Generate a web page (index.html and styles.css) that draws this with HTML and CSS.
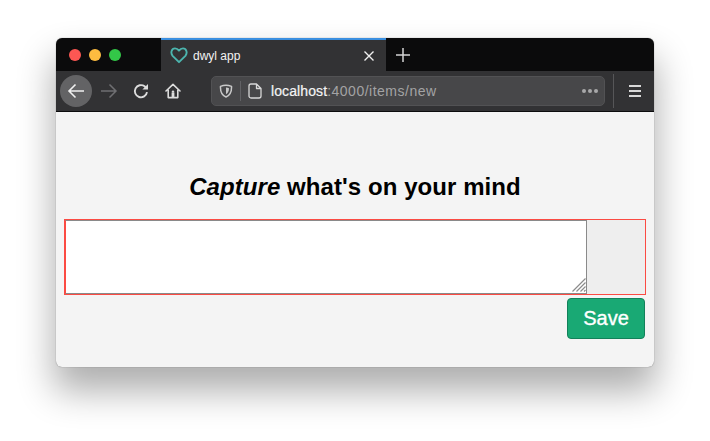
FILE: index.html
```html
<!DOCTYPE html>
<html lang="en">
<head>
<meta charset="utf-8">
<title>dwyl app</title>
<link rel="stylesheet" href="styles.css">
</head>
<body>
<div class="window">
  <div class="titlebar">
    <div class="lights">
      <span class="light red"></span>
      <span class="light yellow"></span>
      <span class="light green"></span>
    </div>
    <div class="tab">
      <svg class="heart" width="18" height="18" viewBox="0 1 18 18"><path d="M9 16.2 L2.6 9.8 C0.2 6.8 1.6 2.4 5 2.4 C6.6 2.4 8 3.2 9 4.6 C10 3.2 11.4 2.4 13 2.4 C16.4 2.4 17.8 6.8 15.4 9.8 Z" fill="none" stroke="#4cb5ae" stroke-width="1.9" stroke-linejoin="round"/></svg>
      <span class="tab-title">dwyl app</span>
      <svg class="tab-close" width="10" height="10" viewBox="0 0 10 10"><path d="M0.5 0.5 L9.5 9.5 M9.5 0.5 L0.5 9.5" stroke="#f0f0f0" stroke-width="1.4"/></svg>
    </div>
    <svg class="newtab" width="14" height="14" viewBox="0 0 14 14"><path d="M7 0 V14 M0 7 H14" stroke="#d4d4d4" stroke-width="1.5"/></svg>
  </div>
  <div class="toolbar">
    <div class="back">
      <svg width="18" height="16" viewBox="0 0 18 16"><path d="M17 8 H2 M8.5 1.5 L2 8 L8.5 14.5" fill="none" stroke="#f0f0f0" stroke-width="1.6"/></svg>
    </div>
    <svg class="forward" width="18" height="16" viewBox="0 0 18 16"><path d="M1 8 H16 M9.5 1.5 L16 8 L9.5 14.5" fill="none" stroke="#6f6f72" stroke-width="1.5"/></svg>
    <svg class="reload" width="16" height="16" viewBox="0 0 16 16"><path d="M14 9.2 A6.1 6.1 0 1 1 11.6 3.3 L13.6 5.2" fill="none" stroke="#dcdcdc" stroke-width="1.9"/><path d="M15 1 V6.6 H9.4 Z" fill="#dcdcdc"/></svg>
    <svg class="home" width="16" height="16" viewBox="0 0 16 16"><path d="M1 8 L8 1.4 L15 8 M3.2 6.8 V14.6 H12.8 V6.8" fill="none" stroke="#dcdcdc" stroke-width="1.6" stroke-linejoin="round" stroke-linecap="round"/><rect x="6.6" y="9.4" width="2.8" height="5" fill="#dcdcdc"/><circle cx="8" cy="8.6" r="1.2" fill="#dcdcdc"/></svg>
    <div class="urlbar">
      <svg class="shield" width="14" height="14" viewBox="0 0 14 14"><path d="M1.5 2.4 Q7 0 12.5 2.4 C12.8 8 10.5 11.6 7 13 C3.5 11.6 1.2 8 1.5 2.4 Z" fill="none" stroke="#c8c8c8" stroke-width="1.5"/><path d="M7 3.5 Q8.8 3.5 10 4.2 C10 7 9 9 7 10.2 Z" fill="#c8c8c8"/></svg>
      <span class="url-sep"></span>
      <svg class="page" width="14" height="16" viewBox="0 0 14 16"><path d="M3 1 H8.5 L13 5.5 V13 A2 2 0 0 1 11 15 H3 A2 2 0 0 1 1 13 V3 A2 2 0 0 1 3 1 Z M8.5 1 V5.5 H13" fill="none" stroke="#d8d8d8" stroke-width="1.3" stroke-linejoin="round"/></svg>
      <span class="url"><span class="host">localhost</span>:4000/items/new</span>
      <span class="dots"><i></i><i></i><i></i></span>
    </div>
    <span class="tool-sep"></span>
    <div class="menu"><i></i><i></i><i></i></div>
  </div>
  <main class="content">
    <h1 class="heading"><em>Capture</em> what's on your mind</h1>
    <div class="field">
      <textarea class="entry" aria-label="Capture"></textarea>
      <svg class="grip" width="14" height="14" viewBox="0 0 14 14"><path d="M0.5 13.5 L13.5 0.5 M4.5 13.5 L13.5 4.5 M8.5 13.5 L13.5 8.5 M12 13.5 L13.5 12" stroke="#8c8c8c" stroke-width="1.2"/></svg>
    </div>
    <div class="actions">
      <button class="save" type="button">Save</button>
    </div>
  </main>
</div>
</body>
</html>
```
FILE: styles.css
```css
* { box-sizing: border-box; }
html, body { margin: 0; height: 100%; background: #fff; overflow: hidden; }
body { padding: 38px 56px 0; font-family: "Liberation Sans", Arial, sans-serif; }
.window {
  width: 598px;
  height: 329px;
  border-radius: 6px;
  overflow: hidden;
  display: flex;
  flex-direction: column;
  background: #f4f4f4;
  box-shadow: 0 0 1px 0 rgba(0,0,0,.55), 0 22px 36px 2px rgba(0,0,0,.32);
  position: relative;
}
.titlebar {
  height: 33px;
  flex: none;
  background: #0b0b0c;
  display: flex;
  align-items: stretch;
}
.lights { width: 105px; display: flex; align-items: center; gap: 8px; padding: 1px 0 0 13px; flex: none; }
.light { width: 12px; height: 12px; border-radius: 50%; }
.red { background: #fc5753; }
.yellow { background: #fdbc40; }
.green { background: #33c748; }
.tab {
  width: 225px;
  flex: none;
  background: #323234;
  border-top: 2px solid #3a8fe0;
  display: flex;
  align-items: center;
  padding-left: 9px;
  padding-right: 12px;
}
.heart { flex: none; }
.tab-title { color: #f2f2f2; font-size: 12px; margin-left: 5px; flex: 1; }
.newtab { align-self: center; margin-left: 10px; }
.toolbar {
  height: 41px;
  flex: none;
  background: #323234;
  border-bottom: 1px solid #0c0c0d;
  display: flex;
  align-items: center;
  padding-left: 4px;
}
.back {
  width: 32px; height: 32px; border-radius: 50%;
  background: #636365;
  display: flex; align-items: center; justify-content: center;
  flex: none;
}
.forward { margin-left: 8px; flex: none; }
.reload { margin-left: 15px; flex: none; }
.home { margin-left: 16px; flex: none; }
.urlbar {
  margin-left: 30px;
  width: 394px; height: 30px;
  flex: none;
  background: #474749;
  border: 1px solid #525254;
  border-radius: 5px;
  display: flex; align-items: center;
  padding-left: 7px;
}
.shield { flex: none; }
.url-sep { width: 1px; height: 20px; background: #626265; margin-left: 7px; flex: none; }
.page { margin-left: 7px; flex: none; }
.url { margin-left: 9px; font-size: 14px; color: #a3a3a4; flex: 1; white-space: nowrap; letter-spacing: .5px; }
.host { color: #f4f4f4; letter-spacing: .1px; -webkit-text-stroke: .2px #f4f4f4; }
.dots { display: flex; gap: 2px; margin-right: 6px; }
.dots i { width: 4px; height: 4px; border-radius: 50%; background: #a8a8a9; display: block; }
.tool-sep { width: 1px; height: 34px; background: #565658; margin-left: 8px; flex: none; }
.menu { margin-left: 15px; width: 12px; display: flex; flex-direction: column; gap: 3px; flex: none; }
.menu i { height: 2px; background: #d8d8d8; display: block; }
.content { flex: 1; padding: 0 8px; display: flex; flex-direction: column; }
.heading {
  margin: 59px 0 0;
  height: 48px;
  font-size: 24px;
  line-height: 32px;
  font-weight: 700;
  letter-spacing: .07px;
  text-align: center;
  color: #000;
}
.field {
  height: 76px;
  width: 582px;
  flex: none;
  border: 1px solid #fb4b43;
  background: #eeeeee;
  display: flex;
  position: relative;
}
.entry {
  width: 522px;
  height: 74px;
  margin: 0;
  background: #fff;
  border: 1px solid #8a8a8a;
  border-left-color: #fb4b43;
  padding: 2px;
  display: block;
  resize: none;
}
.grip { position: absolute; left: 507px; bottom: 2px; }
.actions { display: flex; justify-content: flex-end; padding-top: 3px; width: 581px; }
.save {
  width: 78px; height: 41px;
  background: #19a974;
  border: 1px solid #12815a;
  border-radius: 4px;
  color: #fff;
  font-family: "Liberation Sans", Arial, sans-serif;
  font-size: 20px;
  -webkit-text-stroke: .35px #fff;
  padding: 0;
}
```
